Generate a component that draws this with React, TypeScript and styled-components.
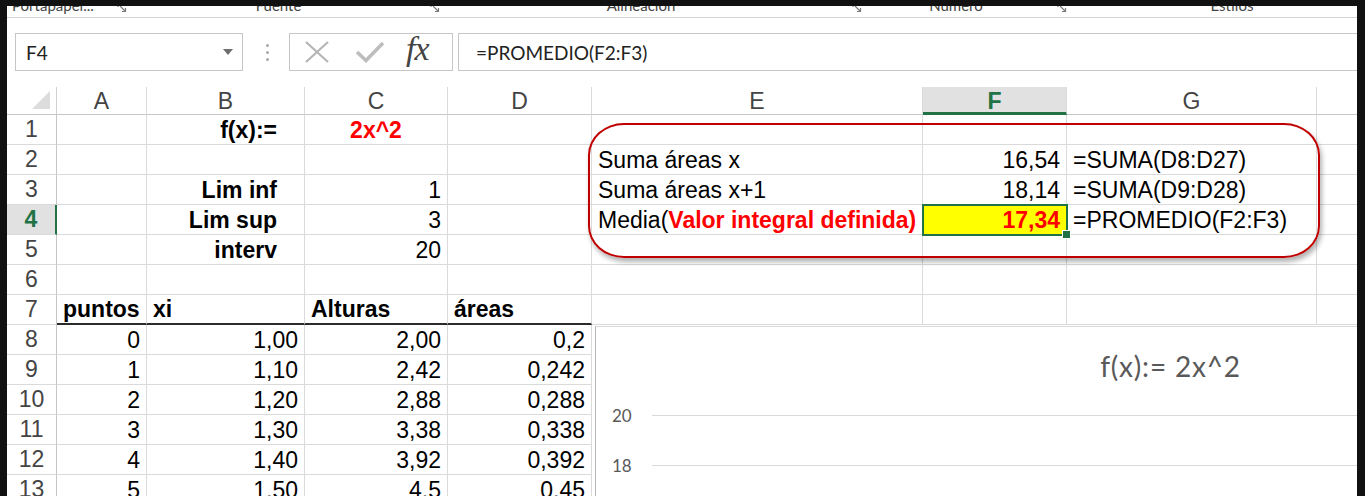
import React from "react";
import styled, { createGlobalStyle, css } from "styled-components";

const Global = createGlobalStyle`
  html, body { margin: 0; padding: 0; background: #111; }
  body { font-family: "Liberation Sans", Arial, sans-serif; }
  * { box-sizing: border-box; }
`;

const Frame = styled.div`
  width: 1365px;
  height: 496px;
  padding: 6px 8px 0 7px;
  background: #111;
  overflow: hidden;
`;

const Window = styled.div`
  background: #fff;
  height: 490px;
  overflow: hidden;
  display: flex;
  flex-direction: column;
`;

/* ---------- ribbon group labels (cut at top) ---------- */
const RibbonStrip = styled.div`
  flex: none;
  height: 12px;
  display: flex;
  overflow: hidden;
  border-bottom: 1px solid #d5d5d5;
`;

const RibbonLabel = styled.div<{ $w: number; $center?: boolean; $pad?: number }>`
  flex: none;
  width: ${(p) => p.$w}px;
  padding-left: ${(p) => p.$pad ?? 0}px;
  text-align: ${(p) => (p.$center ? "center" : "left")};
  font-family: Lato, "Open Sans", sans-serif;
  font-size: 15px;
  line-height: 15px;
  margin-top: -8px;
  color: #444;
  white-space: nowrap;
`;

const Launcher = styled.div<{ $w: number; $pad: number }>`
  flex: none;
  width: ${(p) => p.$w}px;
  padding-left: ${(p) => p.$pad}px;
  display: flex;
  align-items: flex-start;
  svg { margin-top: -3px; }
`;

const LauncherIcon = () => (
  <svg width="10" height="10" viewBox="0 0 10 10">
    <path d="M1 1 H4 M1 1 V4 M3 3 L8.5 8.5 M8.5 5 V8.5 H5" stroke="#7a7a7a" strokeWidth="1.2" fill="none" />
  </svg>
);

/* ---------- formula bar ---------- */
const FormulaBar = styled.div`
  flex: none;
  height: 69px;
  padding: 15px 0 16px 8px;
  display: flex;
  align-items: stretch;
`;

const NameBox = styled.div`
  flex: none;
  width: 228px;
  border: 1px solid #c6c6c6;
  display: flex;
  align-items: center;
  justify-content: space-between;
  padding: 0 9px 0 10px;
  font-family: Lato, "Open Sans", sans-serif;
  font-size: 19px;
  color: #222;
`;

const Dots = styled.div`
  flex: none;
  margin-left: 23px;
  display: flex;
  flex-direction: column;
  justify-content: center;
  gap: 4px;
  span {
    display: block;
    width: 3px;
    height: 3px;
    border-radius: 50%;
    background: #a8a8a8;
  }
`;

const FnBox = styled.div`
  flex: none;
  margin-left: 20px;
  width: 164px;
  border: 1px solid #c6c6c6;
  display: flex;
  align-items: center;
  padding-left: 13px;
  gap: 24px;
`;

const Fx = styled.span`
  font-family: "Liberation Serif", "DejaVu Serif", serif;
  font-style: italic;
  font-size: 34px;
  line-height: 1;
  color: #444;
  margin-left: -3px;
  margin-top: -6px;
  letter-spacing: -1px;
`;

const FormulaInput = styled.div`
  flex: 1;
  margin-left: 5px;
  border: 1px solid #c6c6c6;
  border-right: none;
  display: flex;
  align-items: center;
  padding-left: 17px;
  font-family: Lato, "Open Sans", sans-serif;
  font-size: 19px;
  color: #222;
`;

/* ---------- sheet ---------- */
const Sheet = styled.div`
  position: relative;
  flex: none;
  display: grid;
  grid-template-columns: 50px 90px 158px 143px 144px 331px 144px 250px 200px;
  grid-template-rows: 28px repeat(13, 30px);
  font-size: 23px;
`;

const Corner = styled.div`
  border-right: 1px solid #d0d0d0;
  border-bottom: 1px solid #c6c6c6;
  display: flex;
  align-items: flex-end;
  justify-content: flex-end;
  padding: 0 6px 5px 0;
  &::after {
    content: "";
    width: 0;
    height: 0;
    border-left: 18px solid transparent;
    border-bottom: 18px solid #dcdcdc;
  }
`;

const ColHead = styled.div<{ $active?: boolean }>`
  border-right: 1px solid #dadada;
  border-bottom: 1px solid #c6c6c6;
  display: flex;
  align-items: center;
  justify-content: center;
  color: #444;
  line-height: 1;
  padding-top: 1px;
  ${(p) =>
    p.$active &&
    css`
      background: #e1e1e1;
      color: #217346;
      font-weight: bold;
      border-bottom: 3px solid #217346;
      padding-top: 3px;
    `}
`;

const RowHead = styled.div<{ $active?: boolean }>`
  border-right: 1px solid #c6c6c6;
  border-bottom: 1px solid #dadada;
  display: flex;
  align-items: center;
  justify-content: center;
  color: #444;
  line-height: 1;
  ${(p) =>
    p.$active &&
    css`
      background: #e1e1e1;
      color: #217346;
      font-weight: bold;
      border-right: 2px solid #217346;
    `}
`;

type Align = "left" | "right" | "center";

const Cell = styled.div<{
  $align?: Align;
  $bold?: boolean;
  $color?: string;
  $bg?: string;
  $indent?: boolean;
  $rule?: boolean;
  $selected?: boolean;
}>`
  position: relative;
  border-right: 1px solid #dadada;
  border-bottom: 1px solid #dadada;
  padding: 1px ${(p) => (p.$indent ? 27 : 6)}px 0 6px;
  display: flex;
  align-items: center;
  justify-content: ${(p) =>
    p.$align === "right" ? "flex-end" : p.$align === "center" ? "center" : "flex-start"};
  white-space: nowrap;
  line-height: 1;
  color: ${(p) => p.$color ?? "#000"};
  font-weight: ${(p) => (p.$bold ? "bold" : "normal")};
  background: ${(p) => p.$bg ?? "transparent"};
  ${(p) =>
    p.$rule &&
    css`
      border-bottom: 2px solid #2b2b2b;
    `}
  ${(p) =>
    p.$selected &&
    css`
      outline: 2px solid #217346;
      outline-offset: -1px;
      z-index: 2;
      &::after {
        content: "";
        position: absolute;
        right: -5px;
        bottom: -5px;
        width: 7px;
        height: 7px;
        background: #217346;
        border: 1px solid #fff;
      }
    `}
`;

const RedText = styled.span`
  color: #ff0000;
  font-weight: bold;
`;

const Highlight = styled.div`
  position: absolute;
  left: 581px;
  top: 36px;
  width: 732px;
  height: 135px;
  border: 2.5px solid #c00000;
  border-radius: 36px / 32px;
  box-shadow: 2px 4px 5px rgba(0, 0, 0, 0.3);
  pointer-events: none;
  z-index: 3;
`;

/* ---------- chart ---------- */
const Chart = styled.div`
  grid-column: 6 / span 4;
  grid-row: 9 / span 6;
  width: 1150px;
  margin-left: 3px;
  margin-top: 1px;
  background: #fff;
  border-left: 1px solid #b5b5b5;
  border-top: 1px solid #d9d9d9;
  z-index: 1;
  display: flex;
  flex-direction: column;
  padding-top: 24px;
`;

const ChartTitle = styled.div`
  text-align: center;
  font-family: Lato, "Open Sans", sans-serif;
  font-size: 28px;
  letter-spacing: 0.8px;
  line-height: 30px;
  color: #595959;
  margin-bottom: 9px;
`;

const AxisRow = styled.div`
  height: 50px;
  display: flex;
  align-items: center;
`;

const AxisLabel = styled.span`
  flex: none;
  width: 56px;
  padding-left: 16px;
  font-family: Lato, "Open Sans", sans-serif;
  font-size: 17px;
  color: #595959;
`;

const GridLine = styled.div`
  flex: 1;
  height: 1px;
  background: #d9d9d9;
`;

/* ---------- data ---------- */
type CellDef = {
  t?: React.ReactNode;
  align?: Align;
  bold?: boolean;
  color?: string;
  bg?: string;
  indent?: boolean;
  rule?: boolean;
  sel?: boolean;
};

const E: CellDef = {};
const R = (t: string): CellDef => ({ t, align: "right" });
const LBL = (t: string): CellDef => ({ t, align: "right", bold: true, indent: true });
const H7 = (t: string): CellDef => ({ t, bold: true, rule: true });

const topRows: CellDef[][] = [
  [E, LBL("f(x):="), { t: "2x^2", align: "center", bold: true, color: "#ff0000" }, E, E, E, E, E],
  [E, E, E, E, { t: "Suma áreas x" }, R("16,54"), { t: "=SUMA(D8:D27)" }, E],
  [E, LBL("Lim inf"), R("1"), E, { t: "Suma áreas x+1" }, R("18,14"), { t: "=SUMA(D9:D28)" }, E],
  [
    E,
    LBL("Lim sup"),
    R("3"),
    E,
    {
      t: (
        <>
          Media(<RedText>Valor integral definida)</RedText>
        </>
      ),
    },
    { t: "17,34", align: "right", bold: true, color: "#ff0000", bg: "#ffff00", sel: true },
    { t: "=PROMEDIO(F2:F3)" },
    E,
  ],
  [E, LBL("interv"), R("20"), E, E, E, E, E],
  [E, E, E, E, E, E, E, E],
  [H7("puntos"), H7("xi"), H7("Alturas"), H7("áreas"), E, E, E, E],
];

const lowRows: string[][] = [
  ["0", "1,00", "2,00", "0,2"],
  ["1", "1,10", "2,42", "0,242"],
  ["2", "1,20", "2,88", "0,288"],
  ["3", "1,30", "3,38", "0,338"],
  ["4", "1,40", "3,92", "0,392"],
  ["5", "1,50", "4,5", "0,45"],
];

const cols = ["A", "B", "C", "D", "E", "F", "G", ""];

const renderCell = (c: CellDef, key: string) => (
  <Cell
    key={key}
    $align={c.align}
    $bold={c.bold}
    $color={c.color}
    $bg={c.bg}
    $indent={c.indent}
    $rule={c.rule}
    $selected={c.sel}
  >
    {c.t}
  </Cell>
);

export default function App() {
  return (
    <>
      <Global />
      <Frame>
        <Window>
          <RibbonStrip>
            <RibbonLabel $w={108} $pad={5}>Portapapel...</RibbonLabel>
            <Launcher $w={22} $pad={2}><LauncherIcon /></Launcher>
            <RibbonLabel $w={283} $center>Fuente</RibbonLabel>
            <Launcher $w={30} $pad={10}><LauncherIcon /></Launcher>
            <RibbonLabel $w={382} $center>Alineación</RibbonLabel>
            <Launcher $w={38} $pad={20}><LauncherIcon /></Launcher>
            <RibbonLabel $w={172} $center>Número</RibbonLabel>
            <Launcher $w={33} $pad={15}><LauncherIcon /></Launcher>
            <RibbonLabel $w={314} $center>Estilos</RibbonLabel>
          </RibbonStrip>

          <FormulaBar>
            <NameBox>
              <span>F4</span>
              <svg width="10" height="6" viewBox="0 0 10 6">
                <path d="M0 0 H10 L5 6 Z" fill="#6e6e6e" />
              </svg>
            </NameBox>
            <Dots>
              <span />
              <span />
              <span />
            </Dots>
            <FnBox>
              <svg width="28" height="24" viewBox="0 0 28 24">
                <path d="M3 2 L25 22 M25 2 L3 22" stroke="#b5b5b5" strokeWidth="2.2" fill="none" />
              </svg>
              <svg width="30" height="22" viewBox="0 0 30 22">
                <path d="M2 11 L11 19.5 L28 2" stroke="#bdbdbd" strokeWidth="3.6" fill="none" />
              </svg>
              <Fx>fx</Fx>
            </FnBox>
            <FormulaInput>=PROMEDIO(F2:F3)</FormulaInput>
          </FormulaBar>

          <Sheet>
            <Corner />
            {cols.map((c) => (
              <ColHead key={"h" + c} $active={c === "F"}>
                {c}
              </ColHead>
            ))}

            {topRows.map((row, i) => (
              <React.Fragment key={"r" + i}>
                <RowHead $active={i === 3}>{i + 1}</RowHead>
                {row.map((c, j) => renderCell(c, `c${i}-${j}`))}
              </React.Fragment>
            ))}

            {lowRows.map((row, i) => (
              <React.Fragment key={"l" + i}>
                <RowHead>{i + 8}</RowHead>
                {row.map((v, j) => renderCell(R(v), `l${i}-${j}`))}
              </React.Fragment>
            ))}

            <Chart>
              <ChartTitle>f(x):= 2x^2</ChartTitle>
              <AxisRow>
                <AxisLabel>20</AxisLabel>
                <GridLine />
              </AxisRow>
              <AxisRow>
                <AxisLabel>18</AxisLabel>
                <GridLine />
              </AxisRow>
            </Chart>

            <Highlight />
          </Sheet>
        </Window>
      </Frame>
    </>
  );
}
